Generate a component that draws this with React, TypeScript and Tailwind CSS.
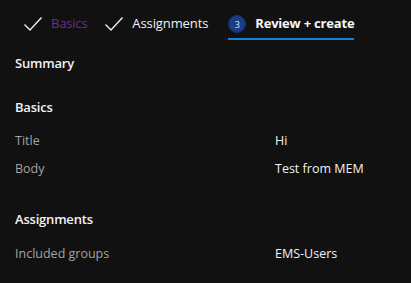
import React from "react";

const font = { fontFamily: '"Segoe UI", "Open Sans", "Noto Sans", sans-serif' };

function Check() {
  return (
    <svg width="20" height="16" viewBox="0 0 20 16" className="shrink-0">
      <path d="M1.5 8.5 L7 14 L18.5 1.5" fill="none" stroke="#f0f0f0" strokeWidth="1.4" />
    </svg>
  );
}

function Row({ label, value }: { label: string; value: string }) {
  return (
    <div className="flex h-[28px] items-center text-[12.5px]">
      <div className="w-[260px] text-[#a3a3a3]">{label}</div>
      <div className="text-[#f2f2f2]">{value}</div>
    </div>
  );
}

function Heading({ children }: { children: React.ReactNode }) {
  return (
    <div className="h-[30px] flex items-center text-[13px] font-semibold text-[#f2f2f2] tracking-[-0.2px]">
      {children}
    </div>
  );
}

export default function App() {
  return (
    <div className="w-[411px] h-[283px] bg-[#111111] overflow-hidden" style={font}>
      <div className="flex items-start pl-[23px] pt-[15px] h-[49px]">
        <div className="flex items-center h-[18px] gap-[8px] mr-[17px]">
          <Check />
          <span className="text-[13px] text-[#6b2f8a] tracking-[-0.2px]">Basics</span>
        </div>
        <div className="flex items-center h-[18px] gap-[8px] mr-[20px]">
          <Check />
          <span className="text-[13px] text-[#f2f2f2] tracking-[-0.1px]">Assignments</span>
        </div>
        <div className="flex flex-col">
          <div className="flex items-center h-[18px] gap-[9px]">
            <div className="w-[18px] h-[18px] rounded-full bg-[#1d3c86] border border-[#16306b] flex items-center justify-center text-[9px] text-[#dfe6ff] leading-none">
              3
            </div>
            <span className="text-[13px] font-bold text-[#f7f7f7] tracking-[-0.2px]">Review + create</span>
          </div>
          <div className="mt-[5px] h-[2px] bg-[#1683d8]" />
        </div>
      </div>
      <div className="px-[15px]">
        <Heading>Summary</Heading>
        <div className="h-[14px]" />
        <Heading>Basics</Heading>
        <div className="mt-[4px]">
          <Row label="Title" value="Hi" />
          <Row label="Body" value="Test from MEM" />
        </div>
        <div className="h-[22px]" />
        <Heading>Assignments</Heading>
        <div className="mt-[5px]">
          <Row label="Included groups" value="EMS-Users" />
        </div>
      </div>
    </div>
  );
}
